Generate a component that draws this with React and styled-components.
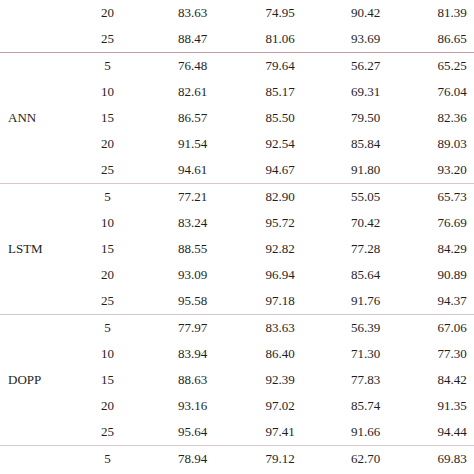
import React from 'react';
import styled, { createGlobalStyle } from 'styled-components';

const Global = createGlobalStyle`
  html, body { margin: 0; padding: 0; background: #ffffff; }
  body { width: 474px; height: 474px; overflow: hidden; }
`;

const Sheet = styled.div`
  display: flex;
  flex-direction: column;
  width: 491px;
  font-family: "Liberation Serif", "DejaVu Serif", serif;
  font-size: 13px;
  color: #1e1e1e;
`;

const Group = styled.div`
  display: grid;
  grid-template-columns: 72px 71px 99px 76px 95px 78px;
  grid-auto-rows: 26px;
  border-bottom: 1px solid ${p => p.$line};
`;

const Label = styled.div`
  grid-column: 1;
  grid-row: 1 / span ${p => p.$span};
  display: flex;
  align-items: center;
  padding-left: 8px;
`;

const Num = styled.div`
  display: flex;
  align-items: center;
  justify-content: center;
  white-space: nowrap;
  grid-column: ${p => p.$col};
`;

const groups = [
  {
    label: '',
    line: '#c99aa6',
    rows: [
      ['20', '83.63', '74.95', '90.42', '81.39'],
      ['25', '88.47', '81.06', '93.69', '86.65'],
    ],
  },
  {
    label: 'ANN',
    line: '#d6c5ca',
    rows: [
      ['5', '76.48', '79.64', '56.27', '65.25'],
      ['10', '82.61', '85.17', '69.31', '76.04'],
      ['15', '86.57', '85.50', '79.50', '82.36'],
      ['20', '91.54', '92.54', '85.84', '89.03'],
      ['25', '94.61', '94.67', '91.80', '93.20'],
    ],
  },
  {
    label: 'LSTM',
    line: '#d6c5ca',
    rows: [
      ['5', '77.21', '82.90', '55.05', '65.73'],
      ['10', '83.24', '95.72', '70.42', '76.69'],
      ['15', '88.55', '92.82', '77.28', '84.29'],
      ['20', '93.09', '96.94', '85.64', '90.89'],
      ['25', '95.58', '97.18', '91.76', '94.37'],
    ],
  },
  {
    label: 'DOPP',
    line: '#dac9ce',
    rows: [
      ['5', '77.97', '83.63', '56.39', '67.06'],
      ['10', '83.94', '86.40', '71.30', '77.30'],
      ['15', '88.63', '92.39', '77.83', '84.42'],
      ['20', '93.16', '97.02', '85.74', '91.35'],
      ['25', '95.64', '97.41', '91.66', '94.44'],
    ],
  },
  {
    label: '',
    line: 'transparent',
    rows: [['5', '78.94', '79.12', '62.70', '69.83']],
  },
];

const App = () => (
  <>
    <Global />
    <Sheet>
      {groups.map((g, gi) => (
        <Group key={gi} $line={g.line}>
          <Label $span={g.rows.length}>{g.label}</Label>
          {g.rows.map((r, ri) =>
            r.map((v, ci) => (
              <Num key={`${ri}-${ci}`} $col={ci + 2}>{v}</Num>
            ))
          )}
        </Group>
      ))}
    </Sheet>
  </>
);

export default App;
